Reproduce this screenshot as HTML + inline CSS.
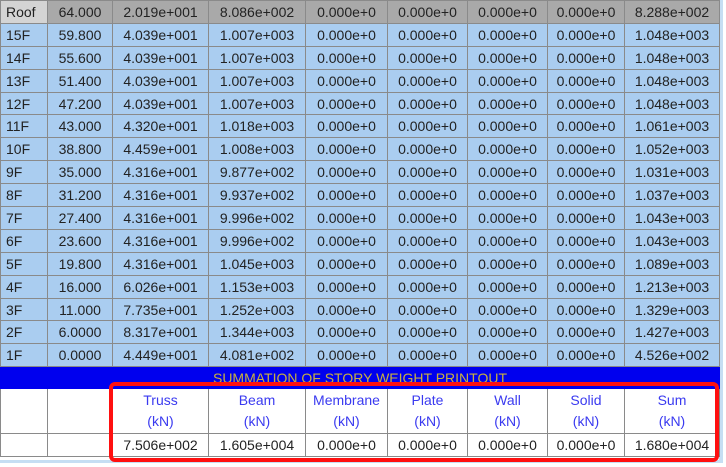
<!DOCTYPE html>
<html><head><style>
body{margin:0;width:726px;height:467px;background:#fff;overflow:hidden;position:relative;font-family:"Liberation Sans",sans-serif;font-size:14px;color:#222}
table{position:absolute;left:0;top:0;border-collapse:collapse;table-layout:fixed;width:719px}
td{border:1px solid #8a8a8a;height:21.9px;padding:0 2px;text-align:center;white-space:nowrap;overflow:hidden;background:#aacdf0}
td:first-child{text-align:left;padding-left:5px}
tr.g td{background:#a9a9a9}
tr.g td:first-child{background:#d4d4d4}
tr.b td{background:#0000ee;color:#c8b040;text-align:center;height:21px;border-color:#0000ee;padding:0}
tr.h td{background:#fff;color:#3a3af0;text-align:center;height:44px;line-height:21px}
tr.w td{background:#fff;height:22px}
#box{position:absolute;left:109px;top:382px;width:602px;height:72px;border:4px solid #ff1010;border-radius:6px}
#edge{position:absolute;left:719px;top:0;width:4px;height:461px;background:#c6def3}
#bot{position:absolute;left:0;top:460px;width:723px;height:3px;background:#c6def3}
</style></head><body>
<div id="edge"></div><div id="bot"></div>
<table>
<colgroup><col style="width:47px"><col style="width:65px"><col style="width:96px"><col style="width:97px"><col style="width:82px"><col style="width:80px"><col style="width:80px"><col style="width:77px"><col style="width:95px"></colgroup>
<tr class="g"><td>Roof</td><td>64.000</td><td>2.019e+001</td><td>8.086e+002</td><td>0.000e+0</td><td>0.000e+0</td><td>0.000e+0</td><td>0.000e+0</td><td>8.288e+002</td></tr>
<tr><td>15F</td><td>59.800</td><td>4.039e+001</td><td>1.007e+003</td><td>0.000e+0</td><td>0.000e+0</td><td>0.000e+0</td><td>0.000e+0</td><td>1.048e+003</td></tr>
<tr><td>14F</td><td>55.600</td><td>4.039e+001</td><td>1.007e+003</td><td>0.000e+0</td><td>0.000e+0</td><td>0.000e+0</td><td>0.000e+0</td><td>1.048e+003</td></tr>
<tr><td>13F</td><td>51.400</td><td>4.039e+001</td><td>1.007e+003</td><td>0.000e+0</td><td>0.000e+0</td><td>0.000e+0</td><td>0.000e+0</td><td>1.048e+003</td></tr>
<tr><td>12F</td><td>47.200</td><td>4.039e+001</td><td>1.007e+003</td><td>0.000e+0</td><td>0.000e+0</td><td>0.000e+0</td><td>0.000e+0</td><td>1.048e+003</td></tr>
<tr><td>11F</td><td>43.000</td><td>4.320e+001</td><td>1.018e+003</td><td>0.000e+0</td><td>0.000e+0</td><td>0.000e+0</td><td>0.000e+0</td><td>1.061e+003</td></tr>
<tr><td>10F</td><td>38.800</td><td>4.459e+001</td><td>1.008e+003</td><td>0.000e+0</td><td>0.000e+0</td><td>0.000e+0</td><td>0.000e+0</td><td>1.052e+003</td></tr>
<tr><td>9F</td><td>35.000</td><td>4.316e+001</td><td>9.877e+002</td><td>0.000e+0</td><td>0.000e+0</td><td>0.000e+0</td><td>0.000e+0</td><td>1.031e+003</td></tr>
<tr><td>8F</td><td>31.200</td><td>4.316e+001</td><td>9.937e+002</td><td>0.000e+0</td><td>0.000e+0</td><td>0.000e+0</td><td>0.000e+0</td><td>1.037e+003</td></tr>
<tr><td>7F</td><td>27.400</td><td>4.316e+001</td><td>9.996e+002</td><td>0.000e+0</td><td>0.000e+0</td><td>0.000e+0</td><td>0.000e+0</td><td>1.043e+003</td></tr>
<tr><td>6F</td><td>23.600</td><td>4.316e+001</td><td>9.996e+002</td><td>0.000e+0</td><td>0.000e+0</td><td>0.000e+0</td><td>0.000e+0</td><td>1.043e+003</td></tr>
<tr><td>5F</td><td>19.800</td><td>4.316e+001</td><td>1.045e+003</td><td>0.000e+0</td><td>0.000e+0</td><td>0.000e+0</td><td>0.000e+0</td><td>1.089e+003</td></tr>
<tr><td>4F</td><td>16.000</td><td>6.026e+001</td><td>1.153e+003</td><td>0.000e+0</td><td>0.000e+0</td><td>0.000e+0</td><td>0.000e+0</td><td>1.213e+003</td></tr>
<tr><td>3F</td><td>11.000</td><td>7.735e+001</td><td>1.252e+003</td><td>0.000e+0</td><td>0.000e+0</td><td>0.000e+0</td><td>0.000e+0</td><td>1.329e+003</td></tr>
<tr><td>2F</td><td>6.0000</td><td>8.317e+001</td><td>1.344e+003</td><td>0.000e+0</td><td>0.000e+0</td><td>0.000e+0</td><td>0.000e+0</td><td>1.427e+003</td></tr>
<tr><td>1F</td><td>0.0000</td><td>4.449e+001</td><td>4.081e+002</td><td>0.000e+0</td><td>0.000e+0</td><td>0.000e+0</td><td>0.000e+0</td><td>4.526e+002</td></tr>
<tr class="b"><td colspan="9" style="text-align:center;padding:0">SUMMATION OF STORY WEIGHT PRINTOUT</td></tr>
<tr class="h"><td></td><td></td><td>Truss<br>(kN)</td><td>Beam<br>(kN)</td><td>Membrane<br>(kN)</td><td>Plate<br>(kN)</td><td>Wall<br>(kN)</td><td>Solid<br>(kN)</td><td>Sum<br>(kN)</td></tr>
<tr class="w"><td></td><td></td><td>7.506e+002</td><td>1.605e+004</td><td>0.000e+0</td><td>0.000e+0</td><td>0.000e+0</td><td>0.000e+0</td><td>1.680e+004</td></tr>
</table>
<div id="box"></div>
</body></html>
